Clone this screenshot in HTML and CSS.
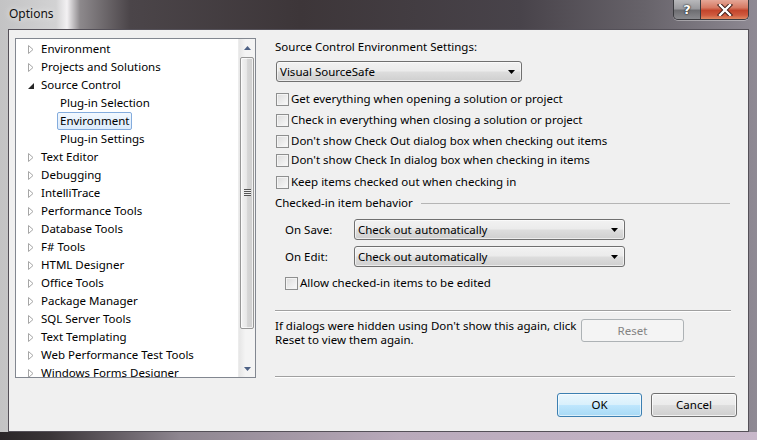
FILE: index.html
```html
<!DOCTYPE html>
<html>
<head>
<meta charset="utf-8">
<link rel="stylesheet" href="styles.css">
</head>
<body>
<div class="window">
  <div class="titlebar">
    <span class="title">Options</span>
    <div class="caption-btns">
      <span class="cbtn help">?</span>
      <span class="cbtn close"><svg width="16" height="12" viewBox="0 0 16 12"><path d="M3 1 L13 11 M13 1 L3 11" stroke="#3a1a14" stroke-width="4.2" stroke-linecap="square"/><path d="M3 1 L13 11 M13 1 L3 11" stroke="#ffffff" stroke-width="2.4" stroke-linecap="square"/></svg></span>
    </div>
  </div>
  <div class="client">
    <div class="tree">
      <div class="tree-list">
        <div class="row"><span class="arrow"><svg width="6" height="9" viewBox="0 0 6 9"><path d="M0.5 0.5 L5 4.5 L0.5 8.5 Z" fill="#fff" stroke="#a6a6a6"/></svg></span><span class="label">Environment</span></div>
        <div class="row"><span class="arrow"><svg width="6" height="9" viewBox="0 0 6 9"><path d="M0.5 0.5 L5 4.5 L0.5 8.5 Z" fill="#fff" stroke="#a6a6a6"/></svg></span><span class="label">Projects and Solutions</span></div>
        <div class="row"><span class="arrow"><svg width="6" height="9" viewBox="0 0 6 9"><path d="M6 2 L6 8 L0 8 Z" fill="#262626"/></svg></span><span class="label">Source Control</span></div>
        <div class="row child"><span class="label">Plug-in Selection</span></div>
        <div class="row child"><span class="label selected">Environment</span></div>
        <div class="row child"><span class="label">Plug-in Settings</span></div>
        <div class="row"><span class="arrow"><svg width="6" height="9" viewBox="0 0 6 9"><path d="M0.5 0.5 L5 4.5 L0.5 8.5 Z" fill="#fff" stroke="#a6a6a6"/></svg></span><span class="label">Text Editor</span></div>
        <div class="row"><span class="arrow"><svg width="6" height="9" viewBox="0 0 6 9"><path d="M0.5 0.5 L5 4.5 L0.5 8.5 Z" fill="#fff" stroke="#a6a6a6"/></svg></span><span class="label">Debugging</span></div>
        <div class="row"><span class="arrow"><svg width="6" height="9" viewBox="0 0 6 9"><path d="M0.5 0.5 L5 4.5 L0.5 8.5 Z" fill="#fff" stroke="#a6a6a6"/></svg></span><span class="label">IntelliTrace</span></div>
        <div class="row"><span class="arrow"><svg width="6" height="9" viewBox="0 0 6 9"><path d="M0.5 0.5 L5 4.5 L0.5 8.5 Z" fill="#fff" stroke="#a6a6a6"/></svg></span><span class="label">Performance Tools</span></div>
        <div class="row"><span class="arrow"><svg width="6" height="9" viewBox="0 0 6 9"><path d="M0.5 0.5 L5 4.5 L0.5 8.5 Z" fill="#fff" stroke="#a6a6a6"/></svg></span><span class="label">Database Tools</span></div>
        <div class="row"><span class="arrow"><svg width="6" height="9" viewBox="0 0 6 9"><path d="M0.5 0.5 L5 4.5 L0.5 8.5 Z" fill="#fff" stroke="#a6a6a6"/></svg></span><span class="label">F# Tools</span></div>
        <div class="row"><span class="arrow"><svg width="6" height="9" viewBox="0 0 6 9"><path d="M0.5 0.5 L5 4.5 L0.5 8.5 Z" fill="#fff" stroke="#a6a6a6"/></svg></span><span class="label">HTML Designer</span></div>
        <div class="row"><span class="arrow"><svg width="6" height="9" viewBox="0 0 6 9"><path d="M0.5 0.5 L5 4.5 L0.5 8.5 Z" fill="#fff" stroke="#a6a6a6"/></svg></span><span class="label">Office Tools</span></div>
        <div class="row"><span class="arrow"><svg width="6" height="9" viewBox="0 0 6 9"><path d="M0.5 0.5 L5 4.5 L0.5 8.5 Z" fill="#fff" stroke="#a6a6a6"/></svg></span><span class="label">Package Manager</span></div>
        <div class="row"><span class="arrow"><svg width="6" height="9" viewBox="0 0 6 9"><path d="M0.5 0.5 L5 4.5 L0.5 8.5 Z" fill="#fff" stroke="#a6a6a6"/></svg></span><span class="label">SQL Server Tools</span></div>
        <div class="row"><span class="arrow"><svg width="6" height="9" viewBox="0 0 6 9"><path d="M0.5 0.5 L5 4.5 L0.5 8.5 Z" fill="#fff" stroke="#a6a6a6"/></svg></span><span class="label">Text Templating</span></div>
        <div class="row"><span class="arrow"><svg width="6" height="9" viewBox="0 0 6 9"><path d="M0.5 0.5 L5 4.5 L0.5 8.5 Z" fill="#fff" stroke="#a6a6a6"/></svg></span><span class="label">Web Performance Test Tools</span></div>
        <div class="row"><span class="arrow"><svg width="6" height="9" viewBox="0 0 6 9"><path d="M0.5 0.5 L5 4.5 L0.5 8.5 Z" fill="#fff" stroke="#a6a6a6"/></svg></span><span class="label">Windows Forms Designer</span></div>
      </div>
      <div class="vscroll">
        <div class="sb-arrow"><svg width="7" height="4" viewBox="0 0 7 4"><path d="M0 4 L3.5 0 L7 4 Z" fill="#4d6185"/></svg></div>
        <div class="sb-track">
          <div class="sb-thumb"><span class="grip"></span></div>
        </div>
        <div class="sb-arrow"><svg width="7" height="4" viewBox="0 0 7 4"><path d="M0 0 L3.5 4 L7 0 Z" fill="#4d6185"/></svg></div>
      </div>
    </div>
    <div class="panel">
      <div class="text">Source Control Environment Settings:</div>
      <div class="combo wide"><span>Visual SourceSafe</span><svg width="7" height="4" viewBox="0 0 7 4"><path d="M0 0 L7 0 L3.5 4 Z" fill="#000"/></svg></div>
      <div class="check r1"><span class="box"></span><span>Get everything when opening a solution or project</span></div>
      <div class="check r2"><span class="box"></span><span>Check in everything when closing a solution or project</span></div>
      <div class="check r3"><span class="box"></span><span>Don't show Check Out dialog box when checking out items</span></div>
      <div class="check r4"><span class="box"></span><span>Don't show Check In dialog box when checking in items</span></div>
      <div class="check r5"><span class="box"></span><span>Keep items checked out when checking in</span></div>
      <div class="group-head"><span>Checked-in item behavior</span><span class="gline"></span></div>
      <div class="field f1"><span class="flabel">On Save:</span><div class="combo"><span>Check out automatically</span><svg width="7" height="4" viewBox="0 0 7 4"><path d="M0 0 L7 0 L3.5 4 Z" fill="#000"/></svg></div></div>
      <div class="field f2"><span class="flabel">On Edit:</span><div class="combo"><span>Check out automatically</span><svg width="7" height="4" viewBox="0 0 7 4"><path d="M0 0 L7 0 L3.5 4 Z" fill="#000"/></svg></div></div>
      <div class="check indent"><span class="box"></span><span>Allow checked-in items to be edited</span></div>
      <div class="sep s1"></div>
      <div class="reset-row">
        <div class="reset-text">If dialogs were hidden using Don't show this again, click<br>Reset to view them again.</div>
        <div class="btn disabled">Reset</div>
      </div>
      <div class="sep s2"></div>
      <div class="actions">
        <div class="btn default ok">OK</div>
        <div class="btn cancel">Cancel</div>
      </div>
    </div>
  </div>
  <div class="bottom-frame"></div>
</div>
</body>
</html>
```
FILE: styles.css
```css
* { box-sizing: border-box; }
html, body { margin: 0; padding: 0; }
body {
  font-family: "Noto Sans", "Open Sans", sans-serif;
  font-size: 11.5px;
  color: #000;
  background: #3c3639;
}
.window {
  width: 757px;
  height: 440px;
  overflow: hidden;
  background:
    linear-gradient(90deg, #c3c3c4 0px, #d2d2d3 56px, #f3f1f3 67px, #8d898c 80px, #4b4549 130px, #3d3639 300px, #48434a 520px, #67636a 645px, #8f8a94 757px);
  display: flex;
  flex-direction: column;
}
.titlebar {
  height: 29px;
  flex: none;
  display: flex;
  align-items: flex-start;
}
.title {
  margin-left: 9px;
  margin-top: 6px;
  line-height: 16px;
  font-size: 12px;
  color: #111;
  text-shadow: 0 0 6px rgba(255,255,255,0.9);
}
.caption-btns {
  margin-left: auto;
  margin-right: 8px;
  display: flex;
  height: 20px;
  border: 1px solid #3a3a3e;
  border-top: none;
  border-radius: 0 0 5px 5px;
  overflow: hidden;
  box-shadow: 0 1px 0 rgba(255,255,255,0.35);
}
.cbtn {
  height: 19px;
  display: flex;
  align-items: center;
  justify-content: center;
}
.help {
  width: 27px;
  background: linear-gradient(180deg, #b8b8bb 0%, #9a9a9e 45%, #6e6e72 55%, #8a8a8e 100%);
  color: #fff;
  font-family: "DejaVu Sans", sans-serif;
  font-weight: bold;
  font-size: 13px;
  text-shadow: 0 0 2px #222, 0 0 1px #000;
  border-right: 1px solid #3a3a3e;
}
.close {
  width: 47px;
  background: linear-gradient(180deg, #e5a797 0%, #d67a63 40%, #c3452c 55%, #cf5a3e 80%, #e08a63 100%);
}
.client {
  margin-left: 8px;
  width: 741px;
  height: 403px;
  flex: none;
  background: #f0f0f0;
  border: 1px solid #545058;
  padding: 8px 0 0 6px;
  display: flex;
  align-items: flex-start;
}
.bottom-frame {
  flex: 1;
  background: linear-gradient(90deg, #2a2628 0px, #3a3538 50px, #8e8690 180px, #b9aabb 400px, #c8b8ca 757px);
}
.tree {
  width: 241px;
  height: 340px;
  border: 1px solid #828790;
  background: #fff;
  display: flex;
  overflow: hidden;
  flex: none;
}
.tree-list {
  flex: 1;
  overflow: hidden;
  padding-top: 1px;
}
.row {
  height: 18px;
  line-height: 18px;
  display: flex;
  align-items: center;
  white-space: nowrap;
}
.arrow {
  width: 25px;
  padding-left: 12px;
  display: flex;
  align-items: center;
  padding-top: 1px;
}
.row.child { padding-left: 41px; }
.label { padding: 0 2px; line-height: 16px; border: 1px solid transparent; }
.row:not(.child) .label { margin-left: -3px; }
.label.selected {
  border-color: #84acdd;
  border-radius: 2px;
  background: linear-gradient(180deg, #f2f8fe 0%, #dcebfc 100%);
}
.vscroll {
  width: 17px;
  display: flex;
  flex-direction: column;
  background: linear-gradient(90deg, #e6e6e6 0%, #f4f4f4 40%, #f4f4f4 100%);
  border-left: 1px solid #ececec;
}
.sb-arrow {
  height: 17px;
  display: flex;
  align-items: center;
  justify-content: center;
}
.sb-track {
  flex: 1;
  padding: 1px 1px 0 1px;
}
.sb-thumb {
  height: 272px;
  border: 1px solid #979797;
  border-radius: 2px;
  background: linear-gradient(90deg, #f3f3f3 0%, #e8e8e8 45%, #d6d6d6 55%, #cfcfcf 100%);
  box-shadow: inset 0 0 0 1px rgba(255,255,255,0.7);
  display: flex;
  align-items: flex-start;
  justify-content: center;
}
.grip {
  margin-top: 131px;
  width: 7px;
  height: 7px;
  background: repeating-linear-gradient(180deg, #555 0, #555 1px, #eee 1px, #eee 2px);
}
.panel {
  margin-left: 19px;
  width: 462px;
  padding-top: 1px;
  display: flex;
  flex-direction: column;
}
.text { line-height: 16px; }
.combo {
  height: 21px;
  border: 1px solid #707070;
  border-radius: 3px;
  background: linear-gradient(180deg, #f2f2f2 0%, #ebebeb 48%, #dddddd 52%, #cfcfcf 100%);
  display: flex;
  align-items: center;
  justify-content: space-between;
  padding: 0 6px 0 3px;
  line-height: 16px;
  box-shadow: inset 0 0 0 1px rgba(255,255,255,0.6);
}
.combo.wide { width: 246px; margin-top: 6px; margin-left: 1px; }
.check {
  display: flex;
  align-items: center;
  line-height: 16px;
  height: 16px;
  white-space: nowrap;
}
.box {
  width: 13px;
  height: 13px;
  margin-left: 1px;
  margin-right: 2px;
  border: 1px solid #8e8f8f;
  background: linear-gradient(135deg, #dcdcdc 0%, #eeeeee 60%, #fbfbfb 100%);
  box-shadow: inset 0 0 0 1px #f4f4f4;
  flex: none;
}
.r1 { margin-top: 9px; }
.r2 { margin-top: 5px; }
.r3 { margin-top: 5px; }
.r4 { margin-top: 3px; }
.r5 { margin-top: 6px; }
.group-head {
  margin-top: 5px;
  display: flex;
  align-items: center;
  line-height: 16px;
}
.gline {
  flex: 1;
  height: 1px;
  background: #d5dfe5;
  border-top: 1px solid #b5b5b5;
  margin-left: 8px;
  margin-right: 7px;
}
.field {
  display: flex;
  align-items: center;
  margin-left: 10px;
}
.f1 { margin-top: 8px; }
.f2 { margin-top: 6px; }
.flabel { width: 69px; line-height: 16px; }
.field .combo { width: 271px; }
.check.indent { margin-top: 8px; margin-left: 9px; }
.sep {
  height: 2px;
  border-top: 1px solid #a0a0a0;
  border-bottom: 1px solid #ffffff;
}
.s1 { margin-top: 19px; width: 456px; }
.reset-row {
  margin-top: 7px;
  display: flex;
  align-items: flex-start;
}
.reset-text { line-height: 14px; width: 306px; white-space: nowrap; }
.btn {
  height: 24px;
  border: 1px solid #707070;
  border-radius: 3px;
  background: linear-gradient(180deg, #f2f2f2 0%, #ebebeb 48%, #dddddd 52%, #cfcfcf 100%);
  box-shadow: inset 0 0 0 1px rgba(255,255,255,0.7);
  display: flex;
  align-items: center;
  justify-content: center;
  line-height: 16px;
}
.btn.disabled {
  width: 103px;
  height: 23px;
  border-color: #adb2b5;
  background: #f4f4f4;
  box-shadow: none;
  color: #838383;
}
.s2 { margin-top: 29px; width: 460px; }
.actions {
  margin-top: 15px;
  display: flex;
  justify-content: flex-end;
  gap: 9px;
}
.btn.ok {
  width: 85px;
  border-color: #3c7fb1;
  background: linear-gradient(180deg, #eaf6fd 0%, #d9f0fc 48%, #bee6fd 52%, #a7d9f5 100%);
  box-shadow: inset 0 0 0 1px rgba(255,255,255,0.6);
}
.btn.cancel { width: 86px; }
```
